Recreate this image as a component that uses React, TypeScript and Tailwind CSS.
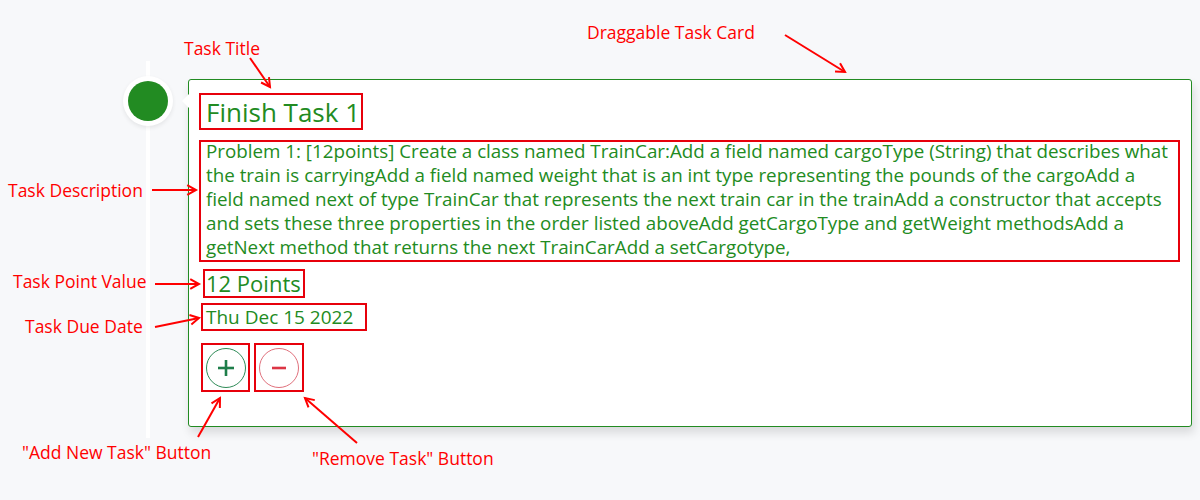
import React from "react";

type Arrow = { x1: number; y1: number; x2: number; y2: number };

const arrows: Arrow[] = [
  { x1: 785, y1: 35, x2: 845, y2: 72 },
  { x1: 250, y1: 58, x2: 270, y2: 87 },
  { x1: 152, y1: 190, x2: 196, y2: 190 },
  { x1: 155, y1: 284, x2: 199, y2: 284 },
  { x1: 155, y1: 327, x2: 199, y2: 318 },
  { x1: 198, y1: 437, x2: 220, y2: 398 },
  { x1: 357, y1: 443, x2: 305, y2: 398 },
];

const labels = [
  { text: "Draggable Task Card", left: 587, top: 21 },
  { text: "Task Title", left: 184, top: 37 },
  { text: "Task Description", left: 8, top: 179 },
  { text: "Task Point Value", left: 13, top: 270 },
  { text: "Task Due Date", left: 25, top: 315 },
  { text: "\"Add New Task\" Button", left: 22, top: 441 },
  { text: "\"Remove Task\" Button", left: 312, top: 447 },
];

const description = [
  "Problem 1: [12points] Create a class named TrainCar:Add a field named cargoType (String) that describes what",
  "the train is carryingAdd a field named weight that is an int type representing the pounds of the cargoAdd a",
  "field named next of type TrainCar that represents the next train car in the trainAdd a constructor that accepts",
  "and sets these three properties in the order listed aboveAdd getCargoType and getWeight methodsAdd a",
  "getNext method that returns the next TrainCarAdd a setCargotype,",
];

function ArrowLine({ x1, y1, x2, y2 }: Arrow) {
  const a = Math.atan2(y2 - y1, x2 - x1);
  const len = 10;
  const h1 = [x2 - len * Math.cos(a - 0.5), y2 - len * Math.sin(a - 0.5)];
  const h2 = [x2 - len * Math.cos(a + 0.5), y2 - len * Math.sin(a + 0.5)];
  return (
    <g>
      <line x1={x1} y1={y1} x2={x2} y2={y2} />
      <polyline points={`${h1[0]},${h1[1]} ${x2},${y2} ${h2[0]},${h2[1]}`} />
    </g>
  );
}

export default function App() {
  return (
    <div
      className="relative h-[500px] w-[1200px] overflow-hidden bg-[#f7f8fa] text-[#228b22]"
      style={{ fontFamily: '"Open Sans", "Noto Sans", sans-serif' }}
    >
      <div className="flex pl-[123px] pt-[79px]">
        {/* timeline marker */}
        <div className="relative w-[50px] shrink-0">
          <div className="absolute left-[23px] top-[-18px] h-[377px] w-[4px] bg-white" />
          <div className="relative mt-[-3px] flex h-[50px] w-[50px] items-center justify-center rounded-full bg-white shadow-[0_2px_4px_rgba(0,0,0,0.08)]">
            <div className="h-[40px] w-[40px] rounded-full bg-[#228b22]" />
          </div>
        </div>

        {/* task card */}
        <div className="relative ml-[15px] h-[348px] w-[1004px] rounded-[3px] border border-[#228b22] bg-white px-[10px] pt-[13px] shadow-[2px_6px_10px_rgba(0,0,0,0.12)]">
          <div className="absolute left-[-7px] top-[14px] h-0 w-0 border-y-[7px] border-r-[7px] border-y-transparent border-r-white" />

          <div className="h-[37px] w-fit border-2 border-red-600 pl-[5px] pr-[1px] pt-[2px]">
            <h1 className="text-[26px] leading-[31px]">Finish Task 1</h1>
          </div>

          <div className="mt-[10px] h-[122px] w-[981px] border-2 border-red-600 px-[5px]">
            <div className="mt-[-3px]">
              {description.map((line) => (
                <div key={line} className="whitespace-nowrap text-[18.8px] leading-[24px]">
                  {line}
                </div>
              ))}
            </div>
          </div>

          <div className="ml-[4px] mt-[7px] h-[29px] w-fit border-2 border-red-600 pl-[1px] pr-[2px]">
            <div className="text-[22px] leading-[25px]">12 Points</div>
          </div>

          <div className="ml-[2px] mt-[5px] h-[28px] w-fit border-2 border-red-600 pl-[3px] pr-[12px]">
            <div className="text-[19px] leading-[24px]">Thu Dec 15 2022</div>
          </div>

          <div className="ml-[2px] mt-[12px] flex gap-[4px]">
            <div className="flex h-[49px] w-[49px] items-center justify-center border-2 border-red-600">
              <button className="flex h-[40px] w-[40px] items-center justify-center rounded-full border border-[#2e8b57] text-[#1e7e4a]">
                <svg width="18" height="18" viewBox="0 0 18 18" stroke="currentColor" strokeWidth="2.6">
                  <line x1="9" y1="1" x2="9" y2="17" />
                  <line x1="1" y1="9" x2="17" y2="9" />
                </svg>
              </button>
            </div>
            <div className="flex h-[49px] w-[50px] items-center justify-center border-2 border-red-600">
              <button className="flex h-[40px] w-[40px] items-center justify-center rounded-full border border-[#e0707c] text-[#dc3545]">
                <svg width="18" height="18" viewBox="0 0 18 18" stroke="currentColor" strokeWidth="2.6">
                  <line x1="2" y1="9" x2="16" y2="9" />
                </svg>
              </button>
            </div>
          </div>
        </div>
      </div>

      {/* annotations */}
      {labels.map((l) => (
        <div
          key={l.text}
          className="absolute whitespace-nowrap text-[17.5px] leading-[22px] text-[#ff0000]"
          style={{ left: l.left, top: l.top }}
        >
          {l.text}
        </div>
      ))}
      <svg
        className="pointer-events-none absolute inset-0"
        width="1200"
        height="500"
        fill="none"
        stroke="#ff0000"
        strokeWidth="2"
      >
        {arrows.map((a, i) => (
          <ArrowLine key={i} {...a} />
        ))}
      </svg>
    </div>
  );
}
